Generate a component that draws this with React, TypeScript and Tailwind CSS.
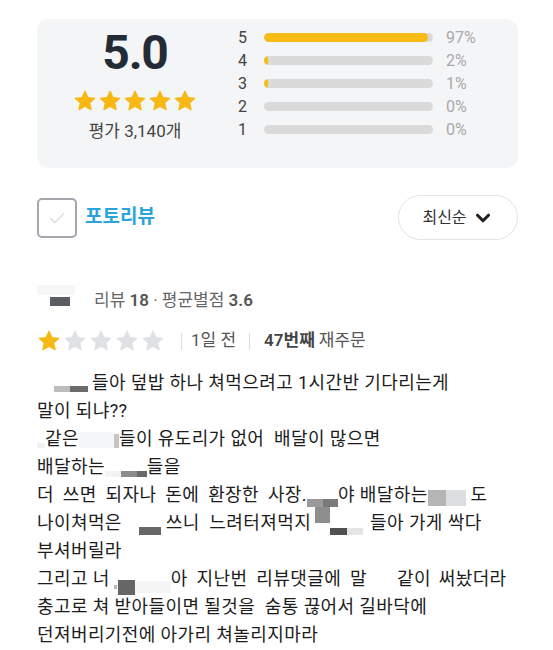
import { ChevronDown } from "lucide-react";

const STAR = "M12 2.2l2.95 6.3 6.85.75-5.1 4.65 1.42 6.78L12 17.2l-6.12 3.48 1.42-6.78-5.1-4.65 6.85-.75z";

function Star({ on }: { on: boolean }) {
  return (
    <svg viewBox="0 0 24 24" className="h-[24px] w-[24px]">
      <path
        d={STAR}
        fill={on ? "#f7b814" : "#dfe1e5"}
        stroke={on ? "#f7b814" : "#dfe1e5"}
        strokeLinejoin="round"
        strokeWidth="1.2"
      />
    </svg>
  );
}

const rows = [
  { n: 5, pct: 97 },
  { n: 4, pct: 2 },
  { n: 3, pct: 1 },
  { n: 2, pct: 0 },
  { n: 1, pct: 0 },
];

export default function App() {
  return (
    <div className="min-h-screen bg-white px-[37px] pt-[19px] font-[Roboto,'Noto_Sans_CJK_KR',sans-serif] text-[#222]">
      {/* Summary card */}
      <div className="flex h-[149px] w-[481px] rounded-xl bg-[#f4f5f7]">
        <div className="flex w-[196px] flex-col items-center pt-[10px]">
          <p className="text-[48px] font-bold leading-[48px] tracking-tight text-[#222b36]">5.0</p>
          <div className="mt-[12px] flex gap-[1px]">
            {[0, 1, 2, 3, 4].map((i) => (
              <Star key={i} on />
            ))}
          </div>
          <p className="mt-[7px] text-[17px] leading-[22px] text-[#444]">평가 3,140개</p>
        </div>
        <div className="flex flex-col pl-[5px] pt-[7px]">
          {rows.map((r) => (
            <div key={r.n} className="flex h-[23px] items-center">
              <span className="w-[26px] text-[16px] text-[#444]">{r.n}</span>
              <div className="h-[9px] w-[169px] overflow-hidden rounded-full bg-[#dadada]">
                {r.pct > 0 && (
                  <div
                    className="h-full min-w-[4px] rounded-full bg-[#f7bd16]"
                    style={{ width: `${r.pct}%` }}
                  />
                )}
              </div>
              <span className="ml-[13px] text-[16px] text-[#a8a8a8]">{r.pct}%</span>
            </div>
          ))}
        </div>
      </div>

      {/* Photo review filter + sort */}
      <div className="mt-[27px] flex h-[45px] w-[481px] items-center justify-between">
        <div className="flex items-center">
          <div className="flex h-[40px] w-[40px] items-center justify-center rounded-[5px] border-2 border-[#a3a7ad]">
            <svg viewBox="0 0 24 24" className="h-[22px] w-[22px]">
              <path d="M5 12.5l4.5 4.5L19 7.5" fill="none" stroke="#d6d8db" strokeWidth="1.4" strokeLinecap="round" strokeLinejoin="round" />
            </svg>
          </div>
          <span className="ml-[8px] text-[19px] font-bold text-[#2ba4dc]">포토리뷰</span>
        </div>
        <button className="flex h-[45px] w-[120px] items-center justify-center gap-[5px] rounded-full border border-[#e3e3e3] bg-white text-[16px] text-[#333]">
          최신순
          <ChevronDown size={22} strokeWidth={3.4} className="text-[#222]" />
        </button>
      </div>

      {/* Review header */}
      <div className="mt-[45px] flex items-start">
        <div className="flex w-[57px] flex-col">
          <span className="block h-[10px] w-[38px] bg-[#f6f6f6]" />
          <span className="ml-[13px] mt-[2px] block h-[9px] w-[20px] bg-[#5a5e63]" />
        </div>
        <p className="mt-[3px] text-[17px] leading-[24px] text-[#666]">
          리뷰 <span className="font-semibold text-[#555]">18</span> · 평균별점{" "}
          <span className="font-semibold text-[#555]">3.6</span>
        </p>
      </div>

      <div className="mt-[17px] flex h-[24px] items-center text-[17px] text-[#555]">
        <div className="flex gap-[2px]">
          <Star on />
          <Star on={false} />
          <Star on={false} />
          <Star on={false} />
          <Star on={false} />
        </div>
        <span className="ml-[16px] h-[17px] w-px bg-[#dcdcdc]" />
        <span className="ml-[9px]">1일 전</span>
        <span className="ml-[13px] h-[17px] w-px bg-[#dcdcdc]" />
        <span className="ml-[14px] font-semibold text-[#444]">47번째</span>
        <span className="ml-[4px]">재주문</span>
      </div>

      {/* Review body */}
      <div className="mt-[16px] whitespace-pre text-[18px] tracking-[0.4px] text-[#1c1c1c]">
        <div className="h-[28px] leading-[28px]">
          <span className="inline-block h-[6px] w-[17px]" />
          <span className="inline-block h-[6px] w-[16px] bg-[#bdbdbd] align-[-3px]" />
          <span className="inline-block h-[6px] w-[18px] bg-[#6b6b6b] align-[-3px]" />
          <span className="ml-[4px]">들아 덮밥 하나 쳐먹으려고 1시간반 기다리는게</span>
        </div>
        <div className="h-[28px] leading-[28px]">말이 되냐??</div>
        <div className="h-[28px] leading-[28px]">
          <span className="inline-block h-[5px] w-[8px] bg-[#f1f1f1] align-[-3px]" />
          같은
          <span className="inline-block h-[16px] w-[35px] bg-[#f5f6f7] align-[-3px]" />
          <span className="inline-block h-[14px] w-[5px] bg-[#c4c4c4] align-[-3px]" />
          들이 유도리가 없어  배달이 많으면
        </div>
        <div className="h-[28px] leading-[28px]">
          배달하는
          <span className="inline-block h-[6px] w-[16px] bg-[#f3f3f3] align-[-4px]" />
          <span className="inline-block h-[6px] w-[16px] bg-[#8c8c8c] align-[-4px]" />
          <span className="inline-block h-[6px] w-[10px] bg-[#6a6a6a] align-[-4px]" />
          들을
        </div>
        <div className="h-[28px] leading-[28px]">
          <span className="[word-spacing:4px]">더 쓰면 되자나 돈에 환장한 사장.</span>
          <span className="inline-block h-[8px] w-[16px] bg-[#9a9a9a] align-[-6px]" />
          <span className="inline-block h-[8px] w-[15px] bg-[#7a7a7a] align-[-6px]" />
          야 배달하는
          <span className="inline-block h-[16px] w-[18px] bg-[#b5b5b5] align-[-5px]" />
          <span className="inline-block h-[16px] w-[20px] bg-[#dcdde0] align-[-5px]" />
          {" "}도
        </div>
        <div className="h-[28px] leading-[28px]">
          나이쳐먹은
          <span className="inline-block h-[8px] w-[17px]" />
          <span className="inline-block h-[8px] w-[22px] bg-[#676767] align-[-6px]" />
          {" "}쓰니  느려터져먹지
          <span className="inline-block h-[8px] w-[4px]" />
          <span className="relative top-[-12px] inline-block h-[16px] w-[15px] bg-[#8e8e8e] align-[-6px]" />
          <span className="inline-block h-[7px] w-[17px] bg-[#505050] align-[-6px]" />
          <span className="inline-block h-[7px] w-[16px] bg-[#e4e5e6] align-[-6px]" />
          <span className="inline-block h-[7px] w-[7px]" />
          들아 가게 싹다
        </div>
        <div className="h-[28px] leading-[28px]">부셔버릴라</div>
        <div className="h-[28px] leading-[28px]">
          그리고 너
          <span className="inline-block h-[4px] w-[8px] align-[-4px]">
            <span className="ml-[4px] block h-[4px] w-[3px] bg-[#b8b8b8]" />
          </span>
          <span className="inline-block h-[15px] w-[17px] bg-[#666] align-[-10px]" />
          <span className="inline-block h-[12px] w-[36px] bg-[#f5f5f5] align-[-8px]" />
          <span className="[word-spacing:4px]">아 지난번 리뷰댓글에 말</span>
          <span className="inline-block h-[8px] w-[30px]" />
          <span className="[word-spacing:3px]">같이 써놨더라</span>
        </div>
        <div className="h-[28px] leading-[28px]">충고로 쳐 받아들이면 될것을  숨통 끊어서 길바닥에</div>
        <div className="h-[28px] leading-[28px]">던져버리기전에 아가리 쳐놀리지마라</div>
      </div>
    </div>
  );
}
